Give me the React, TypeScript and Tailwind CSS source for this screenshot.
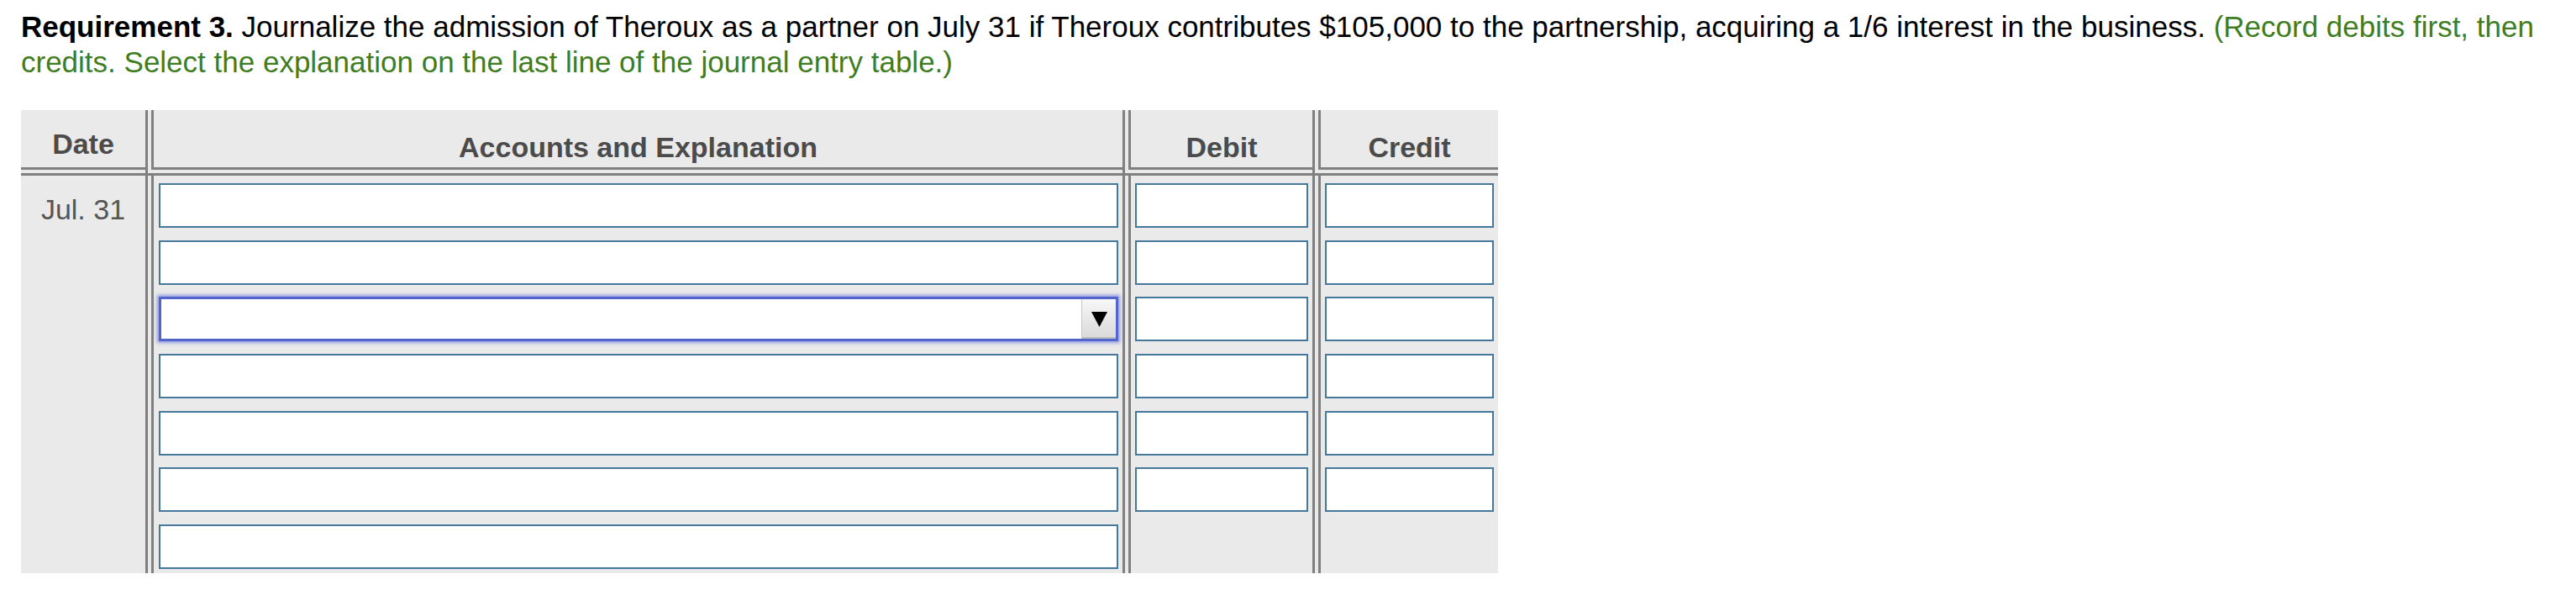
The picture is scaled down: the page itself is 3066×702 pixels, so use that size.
import React from 'react';

const ROWS = 7;

function TextBox() {
    return <div className="h-[53px] w-full shrink-0 border-2 border-[#46789b] bg-white" />;
}

function SelectBox() {
    return (
        <div className="flex h-[53px] w-full shrink-0 border-[3px] border-[#5364cc] bg-white shadow-[0_0_4px_2px_rgba(84,100,214,0.6)]">
            <div className="flex-1" />
            <div className="flex w-[41px] items-center justify-center border-l border-[#c8c8c8] bg-gradient-to-b from-[#f7f7f7] to-[#d9d9d9] shadow-[inset_0_-2px_0_#bdbdbd]">
                <svg width="19" height="18" viewBox="0 0 19 18">
                    <polygon points="0,0 19,0 9.5,18" fill="#000" />
                </svg>
            </div>
        </div>
    );
}

export default function App() {
    return (
        <div className="min-h-[702px] w-[3066px] bg-white px-[25px] pt-[11px] font-['Liberation_Sans',Arial,sans-serif]">
            <p className="text-[35px] leading-[42px] text-black">
                <span className="font-bold">Requirement 3.</span> Journalize the admission of Theroux as a partner on July 31 if Theroux contributes $105,000 to the partnership, acquiring a 1/6 interest in the business.{' '}
                <span className="text-[#3f7d22]">(Record debits first, then credits. Select the explanation on the last line of the journal entry table.)</span>
            </p>

            <div className="mt-[36px] w-[1758px] bg-[#eaeaea] text-[34px] leading-[41px]">
                {/* header */}
                <div className="flex h-[71px] font-bold text-[#4b4b4b]">
                    <div className="flex w-[151px] items-end justify-center border-r-[3px] border-b-[3px] border-[#808080] pb-[7px]">Date</div>
                    <div className="w-[4px]" />
                    <div className="flex w-[1159px] items-end justify-center border-x-[3px] border-b-[3px] border-[#808080] pb-[3px]">Accounts and Explanation</div>
                    <div className="w-[4px]" />
                    <div className="flex w-[222px] items-end justify-center border-x-[3px] border-b-[3px] border-[#808080] pb-[3px]">Debit</div>
                    <div className="w-[4px]" />
                    <div className="flex w-[214px] items-end justify-center border-l-[3px] border-b-[3px] border-[#808080] pb-[3px]">Credit</div>
                </div>
                {/* spacer between double rules */}
                <div className="flex h-[4px]">
                    <div className="w-[151px] border-r-[3px] border-[#808080]" />
                    <div className="w-[4px]" />
                    <div className="w-[1159px] border-r-[3px] border-[#808080]" />
                    <div className="w-[4px]" />
                    <div className="w-[222px] border-r-[3px] border-[#808080]" />
                </div>
                {/* body */}
                <div className="flex h-[476px] border-t-[3px] border-[#808080]">
                    <div className="w-[151px] border-r-[3px] border-[#808080] pt-[20px] text-center text-[#555]">Jul. 31</div>
                    <div className="w-[4px]" />
                    <div className="flex w-[1159px] flex-col gap-[14.7px] border-x-[3px] border-[#808080] pt-[9px] pl-[6px] pr-[5px]">
                        {Array.from({ length: ROWS }).map((_, i) => (i === 2 ? <SelectBox key={i} /> : <TextBox key={i} />))}
                    </div>
                    <div className="w-[4px]" />
                    <div className="flex w-[222px] flex-col gap-[14.7px] border-x-[3px] border-[#808080] px-[5px] pt-[9px]">
                        {Array.from({ length: ROWS - 1 }).map((_, i) => <TextBox key={i} />)}
                    </div>
                    <div className="w-[4px]" />
                    <div className="flex w-[214px] flex-col gap-[14.7px] border-l-[3px] border-[#808080] px-[5px] pt-[9px]">
                        {Array.from({ length: ROWS - 1 }).map((_, i) => <TextBox key={i} />)}
                    </div>
                </div>
            </div>
        </div>
    );
}
